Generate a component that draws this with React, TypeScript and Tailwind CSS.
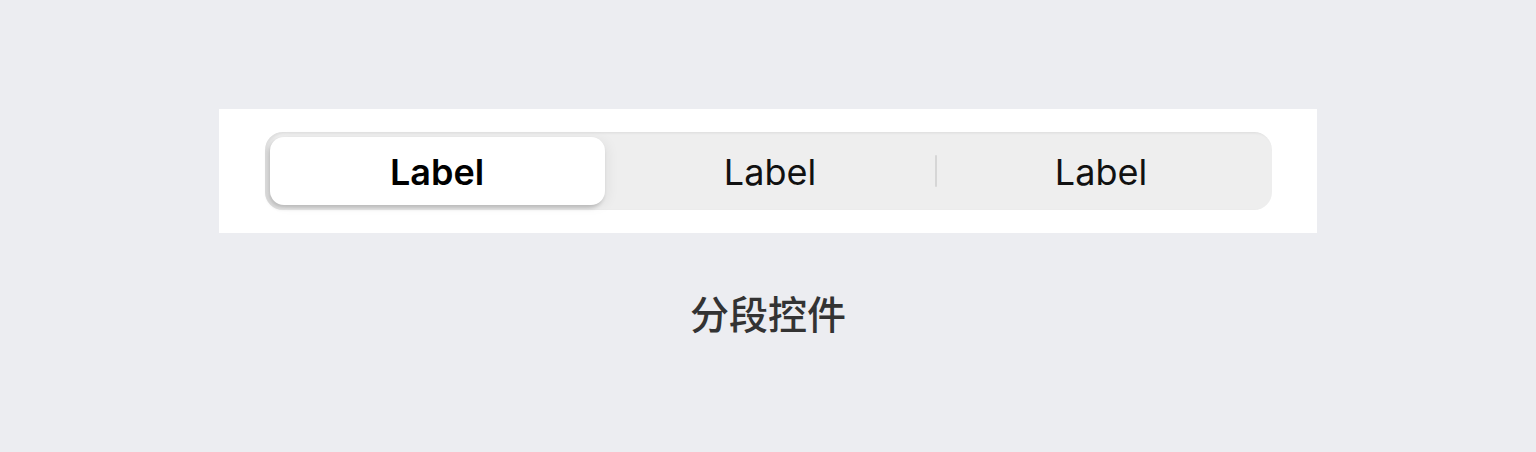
import React, { useState } from "react";

const labels = ["Label", "Label", "Label"];

const SegmentedControl: React.FC = () => {
  const [active, setActive] = useState(0);

  return (
    <div className="flex h-[78px] w-[1007px] rounded-[18px] bg-[#eeeeee] p-[5px] shadow-[inset_2px_1px_3px_rgba(0,0,0,0.08)]">
      {labels.map((label, i) => (
        <div
          key={i}
          className={i === active ? "relative flex w-[335px] items-center" : "relative flex flex-1 items-center"}
        >
          {/* divider between unselected segments */}
          {i > 0 && i !== active && i - 1 !== active && (
            <div className="absolute left-[-1px] top-[18px] h-[32px] w-[2px] rounded bg-[#d6d6d6]" />
          )}
          <button
            onClick={() => setActive(i)}
            className={
              i === active
                ? "flex h-full w-full items-center justify-center rounded-[14px] bg-white pt-[2px] text-[36px] font-semibold text-black shadow-[-2px_3px_4px_rgba(0,0,0,0.2),4px_2px_12px_rgba(0,0,0,0.05)]"
                : "flex h-full w-full items-center justify-center pt-[2px] text-[36px] font-normal text-[#111111]"
            }
          >
            {label}
          </button>
        </div>
      ))}
    </div>
  );
};

export default function App() {
  return (
    <div
      className="flex h-[452px] w-full flex-col items-center bg-[#ecedf1] pt-[109px]"
      style={{ fontFamily: "Inter, 'Noto Sans CJK SC', sans-serif" }}
    >
      {/* Panel */}
      <div className="flex h-[124px] w-[1098px] items-center justify-center bg-white">
        <SegmentedControl />
      </div>

      {/* Caption */}
      <div className="mt-[62px] text-[39px] font-medium leading-none text-[#333333]">分段控件</div>
    </div>
  );
}
